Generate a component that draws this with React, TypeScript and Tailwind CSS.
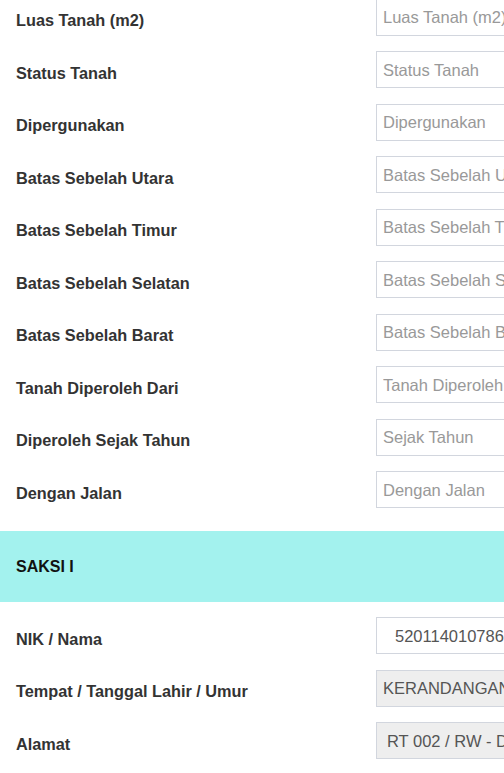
import React from "react";

const font = { fontFamily: '"Liberation Sans", Arial, sans-serif' };

const rows: [string, string][] = [
  ["Luas Tanah (m2)", "Luas Tanah (m2)"],
  ["Status Tanah", "Status Tanah"],
  ["Dipergunakan", "Dipergunakan"],
  ["Batas Sebelah Utara", "Batas Sebelah Utara"],
  ["Batas Sebelah Timur", "Batas Sebelah Timur"],
  ["Batas Sebelah Selatan", "Batas Sebelah Selatan"],
  ["Batas Sebelah Barat", "Batas Sebelah Barat"],
  ["Tanah Diperoleh Dari", "Tanah Diperoleh Dari"],
  ["Diperoleh Sejak Tahun", "Sejak Tahun"],
  ["Dengan Jalan", "Dengan Jalan"],
];

function Row({ label, children }: { label: string; children: React.ReactNode }) {
  return (
    <div className="flex h-[52.5px] shrink-0">
      <div className="w-[376px] shrink-0 pl-4 pt-[11.5px] text-[16.3px] leading-5 font-bold text-[#333]">
        {label}
      </div>
      {children}
    </div>
  );
}

const base =
  "w-[320px] h-[37px] shrink-0 border border-[#d2d6de] pt-[1px] text-[16.5px] text-[#555] placeholder:text-[#999] outline-none";

export default function App() {
  return (
    <div className="w-[504px] h-[773px] overflow-hidden bg-white" style={font}>
      <div className="flex flex-col mt-[-1.3px]">
        {rows.map(([l, p]) => (
          <Row key={l} label={l}>
            <input className={`${base} bg-white pl-[6px]`} style={font} placeholder={p} />
          </Row>
        ))}
        <div className="mt-[7.5px] h-[71px] bg-[#a3f2ee] flex items-center pl-4 text-[16px] font-bold text-[#111]">
          SAKSI I
        </div>
        <div className="h-[15px]" />
        <Row label="NIK / Nama">
          <input
            readOnly
            className={`${base} bg-white pl-[18px]`}
            style={font}
            value="5201140107860002 / AHMAD"
          />
        </Row>
        <Row label="Tempat / Tanggal Lahir / Umur">
          <input
            readOnly
            className={`${base} bg-[#eeeeee] pl-[6px]`}
            style={font}
            value="KERANDANGAN, 01-07-1986 / 38"
          />
        </Row>
        <Row label="Alamat">
          <input
            readOnly
            className={`${base} bg-[#eeeeee] pl-[10px]`}
            style={font}
            value="RT 002 / RW - DUSUN KERANDANGAN"
          />
        </Row>
      </div>
    </div>
  );
}
